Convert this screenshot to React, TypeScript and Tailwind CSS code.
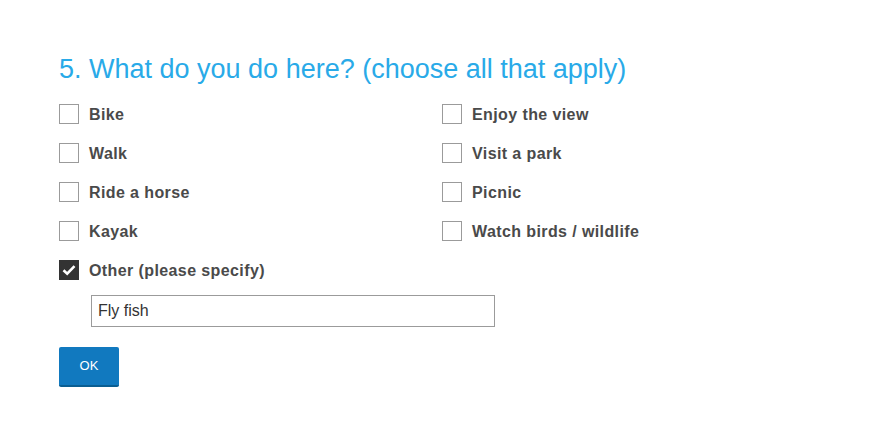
import React from "react";

const left = [
  { label: "Bike", checked: false },
  { label: "Walk", checked: false },
  { label: "Ride a horse", checked: false },
  { label: "Kayak", checked: false },
  { label: "Other (please specify)", checked: true },
];
const right = [
  { label: "Enjoy the view", checked: false },
  { label: "Visit a park", checked: false },
  { label: "Picnic", checked: false },
  { label: "Watch birds / wildlife", checked: false },
];

function Box({ checked }: { checked: boolean }) {
  return checked ? (
    <span className="flex h-[20px] w-[20px] shrink-0 items-center justify-center bg-[#333333]">
      <svg width="16" height="16" viewBox="0 0 16 16">
        <path d="M2.5 8.2 L6.2 11.6 L13.5 4.2" fill="none" stroke="white" strokeWidth="2.6" />
      </svg>
    </span>
  ) : (
    <span className="h-[20px] w-[20px] shrink-0 border border-[#9b9b9b] bg-white" />
  );
}

function Row({ label, checked }: { label: string; checked: boolean }) {
  return (
    <div className="flex h-[20px] items-center gap-[10px]">
      <Box checked={checked} />
      <span className="mt-[2px] text-[16px] font-bold leading-[20px] tracking-[0.4px] text-[#4a4a4a]">
        {label}
      </span>
    </div>
  );
}

export default function App() {
  return (
    <div
      className="h-[445px] w-[884px] bg-white pl-[59px] pt-[53px]"
      style={{ fontFamily: '"Liberation Sans", Arial, sans-serif' }}
    >
      <h1 className="text-[27px] leading-[32px] text-[#29aae8]">
        5. What do you do here? (choose all that apply)
      </h1>
      <div className="mt-[19px] flex">
        <div className="flex w-[383px] flex-col gap-[19px]">
          {left.map((r) => (
            <Row key={r.label} {...r} />
          ))}
        </div>
        <div className="flex flex-col gap-[19px]">
          {right.map((r) => (
            <Row key={r.label} {...r} />
          ))}
        </div>
      </div>
      <div className="ml-[32px] mt-[15px] flex h-[32px] w-[404px] items-center border border-[#9b9b9b] px-[6px] text-[16px] text-[#333333]">
        Fly fish
      </div>
      <button className="mt-[20px] flex h-[40px] w-[60px] items-center justify-center rounded-[2px] border-b-2 border-[#0a5e92] bg-[#1179bf] text-[13px] text-white">
        OK
      </button>
    </div>
  );
}
